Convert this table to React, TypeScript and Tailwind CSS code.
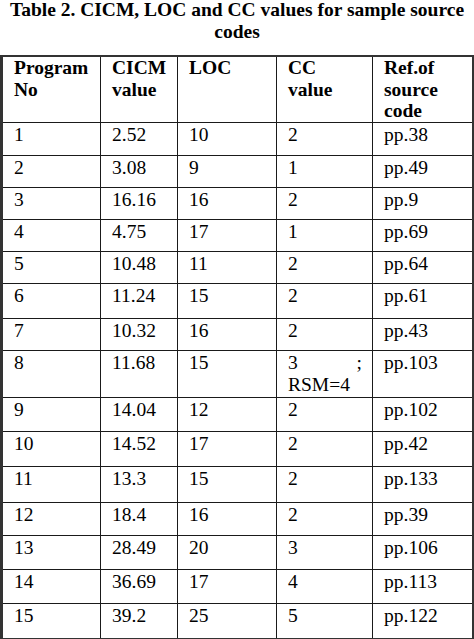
type Row = {
  no: string;
  cicm: string;
  loc: string;
  cc: string;
  ref: string;
  h: string;
};

const rows: Row[] = [
  { no: '1', cicm: '2.52', loc: '10', cc: '2', ref: 'pp.38', h: 'h-[33px]' },
  { no: '2', cicm: '3.08', loc: '9', cc: '1', ref: 'pp.49', h: 'h-[32px]' },
  { no: '3', cicm: '16.16', loc: '16', cc: '2', ref: 'pp.9', h: 'h-[32px]' },
  { no: '4', cicm: '4.75', loc: '17', cc: '1', ref: 'pp.69', h: 'h-[32px]' },
  { no: '5', cicm: '10.48', loc: '11', cc: '2', ref: 'pp.64', h: 'h-[32px]' },
  { no: '6', cicm: '11.24', loc: '15', cc: '2', ref: 'pp.61', h: 'h-[35px]' },
  { no: '7', cicm: '10.32', loc: '16', cc: '2', ref: 'pp.43', h: 'h-[32px]' },
  { no: '8', cicm: '11.68', loc: '15', cc: 'RSM', ref: 'pp.103', h: 'h-[47px]' },
  { no: '9', cicm: '14.04', loc: '12', cc: '2', ref: 'pp.102', h: 'h-[34px]' },
  { no: '10', cicm: '14.52', loc: '17', cc: '2', ref: 'pp.42', h: 'h-[35px]' },
  { no: '11', cicm: '13.3', loc: '15', cc: '2', ref: 'pp.133', h: 'h-[36px]' },
  { no: '12', cicm: '18.4', loc: '16', cc: '2', ref: 'pp.39', h: 'h-[33px]' },
  { no: '13', cicm: '28.49', loc: '20', cc: '3', ref: 'pp.106', h: 'h-[34px]' },
  { no: '14', cicm: '36.69', loc: '17', cc: '4', ref: 'pp.113', h: 'h-[34px]' },
  { no: '15', cicm: '39.2', loc: '25', cc: '5', ref: 'pp.122', h: 'h-[36px]' },
];

const cell = 'border border-[#1a1a1a] pl-[11px] pr-[6px] pt-[1px] align-top';
const head = 'border border-[#1a1a1a] pl-[11px] pr-[6px] align-top';

export default function App() {
  return (
    <div className="w-[474px] h-[639px] overflow-hidden bg-white text-black font-['Liberation_Serif','Times_New_Roman',serif] text-[19.5px] leading-[22px]">
      <h1 className="mb-[13px] -mt-[1px] text-center font-bold leading-[21.5px]">
        Table 2. CICM, LOC and CC values for sample source codes
      </h1>

      <table className="table-fixed border-collapse w-[472px] border-t-2 border-l-[3px] border-r-[3px] border-b-[3px] border-[#333]">
        <colgroup>
          <col className="w-[99px]" />
          <col className="w-[77px]" />
          <col className="w-[99px]" />
          <col className="w-[96px]" />
          <col className="w-[101px]" />
        </colgroup>
        <thead>
          <tr className="h-[64px] font-bold text-left leading-[21.5px]">
            <th className={head}>
              Program
              <br />
              No
            </th>
            <th className={head}>
              CICM
              <br />
              value
            </th>
            <th className={head}>LOC</th>
            <th className={head}>
              CC
              <br />
              value
            </th>
            <th className={head}>
              Ref.of
              <br />
              source
              <br />
              code
            </th>
          </tr>
        </thead>
        <tbody>
          {rows.map(r => (
            <tr key={r.no} className={r.h}>
              <td className={cell}>{r.no}</td>
              <td className={cell}>{r.cicm}</td>
              <td className={cell}>{r.loc}</td>
              <td className={cell}>
                {r.cc === 'RSM' ? (
                  <div>
                    <div className="flex justify-between pr-[4px]">
                      <span>3</span>
                      <span>;</span>
                    </div>
                    <div>RSM=4</div>
                  </div>
                ) : (
                  r.cc
                )}
              </td>
              <td className={cell}>{r.ref}</td>
            </tr>
          ))}
        </tbody>
      </table>
    </div>
  );
}
